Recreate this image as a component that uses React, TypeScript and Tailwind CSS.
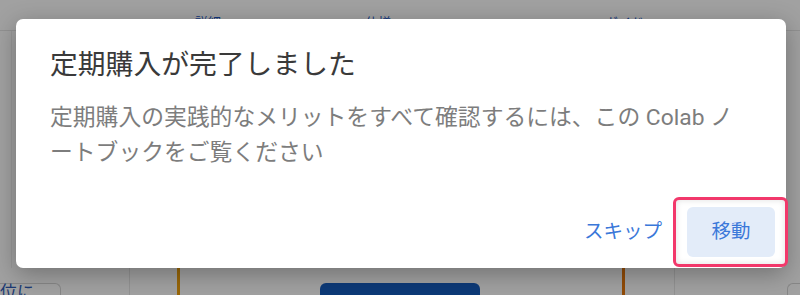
import React from 'react';

const font = { fontFamily: 'Roboto, "Noto Sans CJK JP", sans-serif' };

const PageBehind: React.FC = () => (
    <div className="flex h-full w-full flex-col bg-white">
        <div className="flex h-[31px] items-end border-b border-[#e6e6e6] pl-[195px] text-[13px] leading-[14px] text-[#1a56c4]">
            <span className="w-[170px]">詳細</span>
            <span className="w-[183px]">仕様</span>
            <span className="w-[57px]">〃</span>
            <span>ガイド</span>
        </div>
        <div className="flex flex-1">
            <div className="w-[12px] border-r border-[#f0f0f0]" />
            <div className="flex-1" />
        </div>
        <div className="flex h-[27px] items-end">
            <div className="flex h-[12px] w-[61px] items-start rounded-tr-md border-t border-r border-[#d6d6d6] text-[17px] leading-[16px] text-[#2f5cb8]">
                位に
            </div>
            <div className="h-full w-[69px] border-r border-[#e8e8e8]" />
            <div className="h-full w-[47px]" />
            <div className="h-full w-[3px] bg-[#f1a20e]" />
            <div className="h-full w-[140px]" />
            <div className="h-[12px] w-[160px] rounded-t-md bg-[#155cbe]" />
            <div className="h-full w-[142px]" />
            <div className="h-full w-[3px] bg-[#e6780c]" />
            <div className="h-full w-[50px] border-r border-[#e8e8e8]" />
            <div className="flex-1" />
            <div className="h-[12px] w-[13px] rounded-tl-md border-t border-l border-[#d6d6d6]" />
        </div>
    </div>
);

const Dialog: React.FC = () => (
    <div className="flex h-[249px] w-[770px] flex-col rounded-[7px] bg-white pl-[34px] pt-[27px] shadow-[0_6px_24px_rgba(0,0,0,0.3)]">
        <h2 className="text-[27.8px] font-normal leading-[38px] text-[#3a3a3a]">定期購入が完了しました</h2>
        <p className="mt-[16px] pr-[46px] text-[22.8px] leading-[35px] text-[#7d7d7d]">
            定期購入の実践的なメリットをすべて確認するには、この Colab ノートブックをご覧ください
        </p>
        <div className="mt-auto flex items-center justify-end gap-[13px] pb-[11px] pr-[11px]">
            <button className="h-[50px] px-[12px] text-[19.5px] text-[#3b78d9]">スキップ</button>
            <div className="relative">
                <div className="absolute -left-[14px] -right-[13px] -top-[10px] -bottom-[10px] rounded-[6px] border-[3px] border-[#f2386b] bg-white shadow-[inset_0_0_6px_rgba(0,0,0,0.12)]" />
                <button className="relative h-[50px] w-[88px] rounded-[6px] bg-[#e3ecf9] text-[19.5px] text-[#3b78d9]">
                    移動
                </button>
            </div>
        </div>
    </div>
);

export default function App() {
    return (
        <div className="relative h-[295px] w-[800px] overflow-hidden" style={font}>
            <PageBehind />
            <div className="absolute inset-0 bg-black/[0.37]" />
            <div className="absolute left-[16px] top-[19px]">
                <Dialog />
            </div>
        </div>
    );
}
